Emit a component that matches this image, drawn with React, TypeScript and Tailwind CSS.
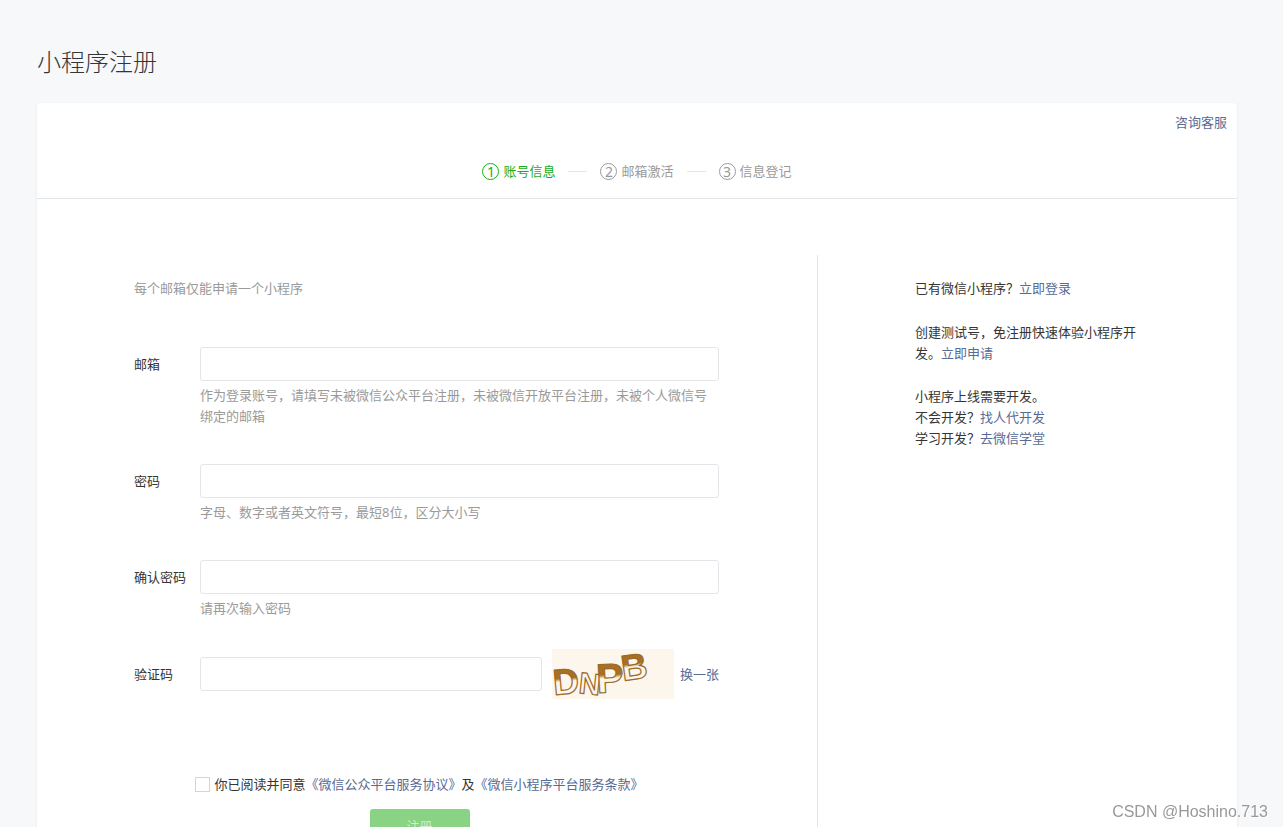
import { useId } from 'react';

const steps = ['账号信息', '邮箱激活', '信息登记'];

function Link({ children }: { children: string }) {
  return (
    <a href="#" className="text-[#576b95] hover:underline">
      {children}
    </a>
  );
}

function Steps() {
  return (
    <ol className="flex items-center justify-center gap-[13px]">
      {steps.map((name, i) => (
        <li key={name} className={`flex items-center gap-[13px] ${i === 0 ? 'text-[#1aad19]' : 'text-[#9a9a9a]'}`}>
          {i > 0 && <span className="h-px w-[19px] bg-[#e4e5e9]" />}
          <span className="flex items-center gap-1">
            <span className="flex size-[17px] items-center justify-center rounded-full border border-current text-sm">
              {i + 1}
            </span>
            {name}
          </span>
        </li>
      ))}
    </ol>
  );
}

function Field({ label, type, help }: { label: string; type: string; help: string }) {
  const id = useId();
  return (
    <div className="flex">
      <label htmlFor={id} className="w-[66px] shrink-0 leading-[34px]">
        {label}
      </label>
      <div className="min-w-0 flex-1">
        <input id={id} type={type} className="block h-[34px] w-full rounded-[3px] border border-[#e4e5e9] bg-white px-2.5" />
        <p className="mt-1 text-[#9a9a9a]">{help}</p>
      </div>
    </div>
  );
}

function Captcha() {
  return (
    <svg viewBox="0 0 122 50" className="h-[50px] w-[122px] shrink-0" role="img" aria-label="验证码">
      <defs>
        <linearGradient id="ink" x1="0" y1="0" x2="0" y2="1">
          <stop offset="0" stopColor="#a87020" />
          <stop offset="0.42" stopColor="#a87020" />
          <stop offset="0.5" stopColor="#fdf6ec" />
        </linearGradient>
      </defs>
      <rect width="122" height="50" fill="#fdf6ec" />
      <g
        fill="url(#ink)"
        stroke="#9a6a28"
        strokeWidth="1.2"
        strokeLinejoin="round"
        fontFamily="'Liberation Sans', sans-serif"
        fontWeight="700"
      >
        <text x="2" y="46" fontSize="36" transform="rotate(-5 2 46)">D</text>
        <text x="26" y="44" fontSize="30" fill="#fdf6ec" transform="rotate(6 26 44)">N</text>
        <text x="45" y="44" fontSize="41" transform="rotate(-3 45 44)">P</text>
        <text x="71" y="32" fontSize="36" transform="rotate(-8 71 32)">B</text>
      </g>
    </svg>
  );
}

export default function App() {
  return (
    <div className="min-h-screen bg-[#f7f8fa] pl-[37px] pr-[46px] pt-[43px] font-['Noto_Sans','Noto_Sans_CJK_SC',sans-serif] text-[13px] leading-[21px] text-[#353535]">
      <h1 className="font-['Noto_Sans_CJK_SC',sans-serif] text-2xl leading-9 font-light">小程序注册</h1>

      <div className="mt-6 rounded-t-[4px] bg-white pb-16 shadow-[0_1px_3px_rgba(0,0,0,0.08)]">
        <header className="border-b border-[#e4e5e9] pb-4">
          <div className="px-2.5 pt-[9px] pb-7 text-right">
            <Link>咨询客服</Link>
          </div>
          <Steps />
        </header>

        <main className="mt-14 flex">
          <form className="flex-1 border-r border-[#e4e5e9] pt-[23px] pr-[98px] pb-16 pl-[97px]" onSubmit={(e) => e.preventDefault()}>
            <p className="text-[#9a9a9a]">每个邮箱仅能申请一个小程序</p>

            <div className="mt-12 flex flex-col gap-[37px]">
              <Field label="邮箱" type="email" help="作为登录账号，请填写未被微信公众平台注册，未被微信开放平台注册，未被个人微信号绑定的邮箱" />
              <Field label="密码" type="password" help="字母、数字或者英文符号，最短8位，区分大小写" />
              <Field label="确认密码" type="password" help="请再次输入密码" />
            </div>

            <div className="mt-[30px] flex items-center">
              <label htmlFor="captcha" className="w-[66px] shrink-0">
                验证码
              </label>
              <input id="captcha" type="text" className="h-[34px] min-w-0 flex-1 rounded-[3px] border border-[#e4e5e9] bg-white px-2.5" />
              <span className="ml-2.5 flex items-center gap-1.5">
                <Captcha />
                <Link>换一张</Link>
              </span>
            </div>

            <div className="mt-[75px] flex flex-col items-center gap-[14px] pr-[14px]">
              <div className="flex items-center gap-1">
                <input
                  id="agree"
                  type="checkbox"
                  className="size-[15px] appearance-none border border-[#d5d5d8] bg-white checked:bg-[#1aad19]"
                />
                <span>
                  <label htmlFor="agree">你已阅读并同意</label>
                  <Link>《微信公众平台服务协议》</Link>及<Link>《微信小程序平台服务条款》</Link>
                </span>
              </div>
              <button type="submit" className="h-[34px] w-[100px] rounded-[3px] bg-[#8ad284] text-[#d0edce]">
                注册
              </button>
            </div>
          </form>

          <aside className="w-[419px] shrink-0 px-[97px] pt-[23px]">
            <p>
              已有微信小程序？<Link>立即登录</Link>
            </p>
            <p className="mt-[23px]">
              创建测试号，免注册快速体验小程序开发。<Link>立即申请</Link>
            </p>
            <p className="mt-[22px]">小程序上线需要开发。</p>
            <p>
              不会开发？<Link>找人代开发</Link>
            </p>
            <p>
              学习开发？<Link>去微信学堂</Link>
            </p>
          </aside>
        </main>
      </div>

      <div className="fixed right-[15px] bottom-[5px] font-['Liberation_Sans',sans-serif] text-base leading-5 text-[#999999] [text-shadow:1px_1px_0_#ffffff]">
        CSDN @Hoshino.713
      </div>
    </div>
  );
}
